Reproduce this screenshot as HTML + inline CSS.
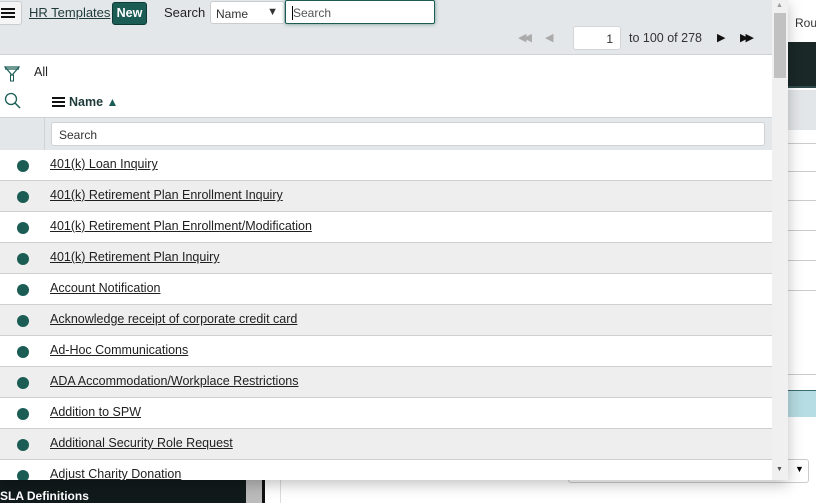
<!DOCTYPE html>
<html><head><style>
*{margin:0;padding:0;box-sizing:border-box}
body{width:816px;height:503px;overflow:hidden;position:relative;background:#fff;font-family:"Liberation Sans",sans-serif;font-size:12px;color:#2e2e2e}
.abs{position:absolute}
a{color:#1f1f1f;text-decoration:underline}
.row{position:absolute;left:0;width:772px;height:31px;border-bottom:1px solid #cfcfcf}
.row .dot{position:absolute;left:17px;top:10px;width:12px;height:12px;border-radius:50%;background:#1b5d55}
.row a{position:absolute;left:50px;top:7px;font-size:12.5px}
</style></head><body>
<!-- background page -->
<div class="abs" style="left:788px;top:0;width:28px;height:503px;background:#fff"></div>
<div class="abs" style="left:795px;top:16px;font-size:12px;color:#333">Rou</div>
<div class="abs" style="left:788px;top:42px;width:28px;height:46px;background:#1a2828;border-bottom:2px solid #2f4a4a"></div>
<div class="abs" style="left:788px;top:90px;width:28px;height:40px;background:#e3e6e9"></div>
<div class="abs" style="left:788px;top:143px;width:28px;height:1px;background:#ccc"></div>
<div class="abs" style="left:788px;top:171px;width:28px;height:1px;background:#ccc"></div>
<div class="abs" style="left:788px;top:200px;width:28px;height:1px;background:#ccc"></div>
<div class="abs" style="left:788px;top:230px;width:28px;height:1px;background:#ccc"></div>
<div class="abs" style="left:788px;top:260px;width:28px;height:1px;background:#ccc"></div>
<div class="abs" style="left:788px;top:290px;width:28px;height:1px;background:#ccc"></div>
<div class="abs" style="left:788px;top:374px;width:28px;height:1px;background:#ccc"></div>
<div class="abs" style="left:788px;top:390px;width:28px;height:27px;background:#b6dde3;border-top:1px solid #3a6b70"></div>
<div class="abs" style="left:568px;top:459px;width:241px;height:24px;border:1px solid #ccc;border-radius:3px;background:#fff"></div>
<div class="abs" style="left:795px;top:464px;font-size:9px;color:#000">▼</div>
<div class="abs" style="left:0;top:480px;width:246px;height:23px;background:#111a1a;color:#fff;font-weight:bold;font-size:12px;padding:10px 0 0 0;line-height:12px">SLA Definitions</div>
<div class="abs" style="left:246px;top:480px;width:16px;height:23px;background:#bbb"></div>
<div class="abs" style="left:262px;top:480px;width:3px;height:23px;background:#111"></div>
<div class="abs" style="left:280px;top:480px;width:1px;height:23px;background:#ddd"></div>

<!-- popup -->
<div class="abs" style="left:0;top:0;width:788px;height:480px;background:#fff;box-shadow:0 4px 14px rgba(0,0,0,.25)"></div>
<div class="abs" style="left:0;top:0;width:772px;height:55px;background:#e4e7ea;border-bottom:1px solid #cfd3d6"></div>
<div class="abs" style="left:-4px;top:1px;width:26px;height:24px;background:#f5f5f5;border:1px solid #c9cdd0;border-radius:3px"></div>
<div class="abs" style="left:1px;top:8px;width:14px;height:2px;background:#111;box-shadow:0 4px 0 #111,0 8px 0 #111"></div>
<div class="abs" style="left:29px;top:5px;font-size:13px"><a style="color:#1f3a3a">HR Templates</a></div>
<div class="abs" style="left:112px;top:2px;width:35px;height:23px;background:#1b5d55;border:1px solid #0e3a35;border-radius:3px;color:#fff;font-weight:bold;font-size:12.5px;text-align:center;line-height:21px">New</div>
<div class="abs" style="left:164px;top:5px;font-size:13px;color:#222">Search</div>
<div class="abs" style="left:210px;top:1px;width:75px;height:23px;background:#fff;border:1px solid #c9cdd0;border-radius:3px;font-size:12px;padding:5px 0 0 5px;color:#333">Name<span style="position:absolute;right:6px;top:4px;font-size:11px">▼</span></div>
<div class="abs" style="left:285px;top:0;width:150px;height:24px;background:#fff;border:1px solid #1b5d55;border-radius:2px;box-shadow:0 0 4px rgba(27,93,85,.6);font-size:12px;padding:5px 0 0 6px;color:#555"><span style="border-left:1px solid #000">Search</span></div>
<div class="abs" style="left:518px;top:31px;font-size:11px;color:#aaa;letter-spacing:-3px">◀◀</div>
<div class="abs" style="left:545px;top:31px;font-size:11px;color:#aaa">◀</div>
<div class="abs" style="left:573px;top:26px;width:48px;height:24px;background:#fff;border:1px solid #d3d6d9;border-radius:3px;text-align:right;padding:5px 7px 0 0;font-size:12px">1</div>
<div class="abs" style="left:629px;top:31px;font-size:12.5px;color:#333">to 100 of 278</div>
<div class="abs" style="left:717px;top:31px;font-size:11px;color:#111">▶</div>
<div class="abs" style="left:740px;top:31px;font-size:11px;color:#111;letter-spacing:-3px">▶▶</div>
<!-- scrollbar -->
<div class="abs" style="left:772px;top:0;width:16px;height:480px;background:#f0f0f0"></div>
<div class="abs" style="left:774px;top:13px;width:12px;height:65px;background:#c1c1c1"></div>
<div class="abs" style="left:776px;top:2px;font-size:7px;color:#999">▲</div>
<div class="abs" style="left:776px;top:466px;font-size:7px;color:#555">▼</div>
<!-- filter -->
<svg class="abs" style="left:4px;top:66px" width="16" height="18" viewBox="0 0 16 18"><path d="M1 1h14L9 8v1H7V8z M1 3h14" fill="none" stroke="#1b5d55" stroke-width="1.2"/><rect x="6.5" y="9" width="3" height="6" fill="none" stroke="#1b5d55" stroke-width="1"/></svg>
<div class="abs" style="left:34px;top:65px;font-size:12.5px;color:#222">All</div>
<svg class="abs" style="left:4px;top:92px" width="18" height="18" viewBox="0 0 18 18"><circle cx="7" cy="7" r="5.5" fill="none" stroke="#1b5d55" stroke-width="1.3"/><path d="M11 11l5 5" stroke="#1b5d55" stroke-width="1.5"/></svg>
<div class="abs" style="left:52px;top:97px;width:13px;height:2px;background:#111;box-shadow:0 4px 0 #111,0 8px 0 #111"></div>
<div class="abs" style="left:69px;top:95px;font-size:12.5px;font-weight:bold;color:#1f3a3a">Name <span style="font-size:12px;color:#1b5d55">▲</span></div>
<div class="abs" style="left:0;top:117px;width:772px;height:33px;background:#e4e7ea;border-top:1px solid #cfd3d6"></div>
<div class="abs" style="left:44px;top:117px;width:1px;height:33px;background:#cfd3d6"></div>
<div class="abs" style="left:51px;top:122px;width:714px;height:24px;background:#fff;border:1px solid #cfd3d6;border-radius:3px;font-size:12px;padding:5px 0 0 7px;color:#333">Search</div>
<!-- rows -->
<div class="row" style="top:150px;background:#fff"><span class="dot"></span><a>401(k) Loan Inquiry</a></div>
<div class="row" style="top:181px;background:#eee"><span class="dot"></span><a>401(k) Retirement Plan Enrollment Inquiry</a></div>
<div class="row" style="top:212px;background:#fff"><span class="dot"></span><a>401(k) Retirement Plan Enrollment/Modification</a></div>
<div class="row" style="top:243px;background:#eee"><span class="dot"></span><a>401(k) Retirement Plan Inquiry</a></div>
<div class="row" style="top:274px;background:#fff"><span class="dot"></span><a>Account Notification</a></div>
<div class="row" style="top:305px;background:#eee"><span class="dot"></span><a>Acknowledge receipt of corporate credit card</a></div>
<div class="row" style="top:336px;background:#fff"><span class="dot"></span><a>Ad-Hoc Communications</a></div>
<div class="row" style="top:367px;background:#eee"><span class="dot"></span><a>ADA Accommodation/Workplace Restrictions</a></div>
<div class="row" style="top:398px;background:#fff"><span class="dot"></span><a>Addition to SPW</a></div>
<div class="row" style="top:429px;background:#eee"><span class="dot"></span><a>Additional Security Role Request</a></div>
<div class="row" style="top:460px;height:20px;overflow:hidden;background:#fff;border:none"><span class="dot"></span><a>Adjust Charity Donation</a></div>
</body></html>
